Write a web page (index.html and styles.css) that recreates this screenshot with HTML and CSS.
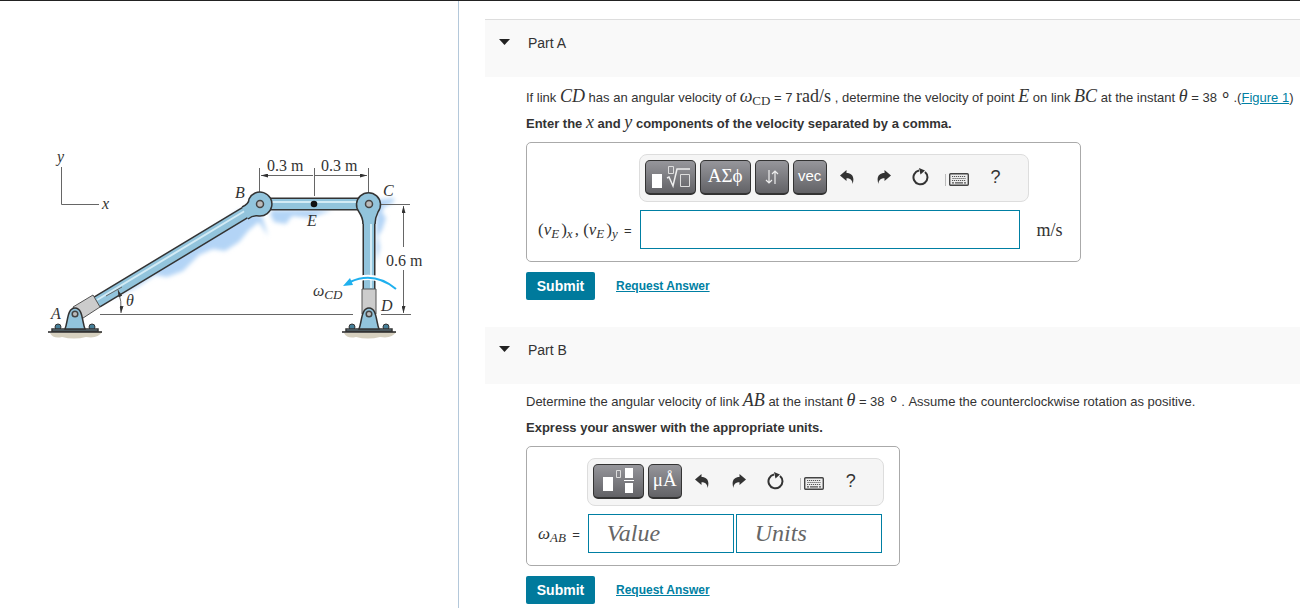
FILE: index.html
```html
<!DOCTYPE html>
<html lang="en">
	<head>
		<meta charset="utf-8">
		<title>Item 1</title>
		<link rel="stylesheet" href="styles.css">
	</head>
	<body>
		<svg class="sprite" aria-hidden="true">
			<symbol id="undo" viewBox="0 0 14 14">
				<path d="M0 5.5 6.5 0v3c5.500 0 8.500 4 6 11C12.500 10 10 8.300 6.500 8.300V11z"/>
			</symbol>
			<symbol id="redo" viewBox="0 0 14 14">
				<path d="M14 5.5 7.5 0v3C2 3-1 7 1.500 14 1.500 10 4 8.300 7.500 8.300V11z"/>
			</symbol>
			<symbol id="reset" viewBox="0 0 18 18">
				<path d="M13 4a7 7 0 1 1-6-1.500" fill="none" stroke="#333" stroke-width="2"/>
				<path d="M7 0l6 2.500-4.500 4z"/>
			</symbol>
			<symbol id="keyboard" viewBox="0 0 24 13">
				<path d="M.5 1v12" stroke="#bbb" fill="none"/>
				<rect x="4.7" y=".7" width="18.6" height="11.6" rx="1" fill="#eee" stroke="#444" stroke-width="1.4"/>
				<path d="M7 3.500h14M7.500 5.500h13M7 7.500h14" fill="none" stroke="#555" stroke-width="1.2" stroke-dasharray="1.2 .8"/>
				<path d="M7 9.800h2M10 9.800h8M19 9.800h2" fill="none" stroke="#555" stroke-width="1.2"/>
			</symbol>
		</svg>

		<div class="page">
			<aside class="figure">
				<svg class="linkage" viewBox="0 0 390 200" role="img" aria-label="Linkage ABCD">
					<defs>
						<filter id="soft"><feGaussianBlur stdDeviation="2"/></filter>
						<marker id="arrow" viewBox="0 0 7 4" refX="7" refY="2" markerWidth="7" markerHeight="4" markerUnits="userSpaceOnUse" orient="auto-start-reverse">
							<path d="M0 0 7 2 0 4z" fill="#333"/>
						</marker>
						<g id="support">
							<path class="ground" d="M-25 19q3 6 12 4 12 3 24 0 12 2 16-5z"/>
							<circle class="bolt" cx="-17" cy="13" r="3"/>
							<circle class="bolt" cx="17" cy="13" r="3"/>
							<path class="steel" d="M-23 15h46v2h-46z"/>
							<path class="steel" d="M-10 15C-7 8-8-6 0-6S7 8 10 15z"/>
							<path d="M-27 18h54" stroke="#222" stroke-width="1.5"/>
						</g>
					</defs>

					<!-- shading behind the links -->
					<g class="shade" filter="url(#soft)">
						<path d="M70 160 200 70l22 6 6 20-9-14-10 8-10 12-14 9-12-2-14 6-16 16-16 6-12-2-18 12z"/>
						<path d="M232 70h60l-22 8-18-2-6 8-12-2-4-8z"/>
						<path d="M336 60l18-2v4l-10 5-2 5 4 6-4 12-4 6 2 12-4 14z"/>
					</g>

					<!-- axes and dimension lines -->
					<g class="thin">
						<path d="M21.500 27v37.500H59"/>
						<path d="M60 174.500h253M341 174.500h30M340 64.500h30"/>
						<path d="M219.500 28v24M274.500 28v28M328.500 28v24"/>
						<path d="M221 35.500h52M275 35.500h52" marker-start="url(#arrow)" marker-end="url(#arrow)"/>
						<path d="M363.500 66v41" marker-start="url(#arrow)"/>
						<path d="M363.500 130v43" marker-end="url(#arrow)"/>
					</g>

					<!-- links -->
					<path class="outline" d="M57 162 216 66M222 64h104M329 66v84"/>
					<path class="bar" d="M57 162 216 66M222 64h104M329 66v84"/>
					<path class="shine" d="M57 160 208 69M232 62h84M331 80v68"/>
					<path class="sleeve" d="M33 167l20-12 7 12-20 13z"/>
					<path class="sleeve" d="M322 149h14v25h-14z"/>
					<path class="steel" d="M202 67Q209 64 209 59A12 12 0 1 1 219 76Q213 75 208 79"/>
					<path class="steel" d="M323 84Q323 78 319 72A12 12 0 1 1 338 72Q335 78 335 84"/>
					<use href="#support" x="35" y="174"/>
					<use href="#support" x="329" y="174"/>
					<g class="pin">
						<circle cx="220" cy="64" r="3.5"/>
						<circle cx="329" cy="64" r="3.5"/>
						<circle cx="35" cy="174" r="2.8"/>
						<circle cx="329" cy="174" r="2.8"/>
					</g>
					<circle cx="274" cy="64" r="3.3" fill="#111"/>
					<g class="thin">
						<path d="M66 156l16-9"/>
						<path d="M78 150q4 11 3 23" marker-start="url(#arrow)" marker-end="url(#arrow)"/>
					</g>

					<path d="M356 149q-22-19-46-7" fill="none" stroke="#fff" stroke-width="5"/>
					<path d="M356 149q-22-18-46-7" fill="none" stroke="#1fb0ee" stroke-width="2"/>
					<path d="M303 146l7-8 3 7z" fill="#1fb0ee"/>

					<g class="label">
						<text x="17" y="22"><tspan class="it">y</tspan></text>
						<text x="62" y="69"><tspan class="it">x</tspan></text>
						<text x="11" y="179"><tspan class="it">A</tspan></text>
						<text x="86" y="166"><tspan class="it">θ</tspan></text>
						<text x="195" y="58"><tspan class="it">B</tspan></text>
						<text x="267" y="86"><tspan class="it">E</tspan></text>
						<text x="343" y="56"><tspan class="it">C</tspan></text>
						<text x="341" y="171"><tspan class="it">D</tspan></text>
						<text x="273" y="156"><tspan class="it">ω</tspan><tspan class="it small" dy="3">CD</tspan></text>
						<text x="227" y="31">0.3 m</text>
						<text x="281" y="31">0.3 m</text>
						<text x="346" y="126">0.6 m</text>
					</g>
				</svg>
			</aside>

			<main class="parts">
				<section class="part">
					<header class="part-head first">
						<button class="toggle" aria-label="Collapse Part A"></button>
						<h2>Part A</h2>
					</header>
					<div class="part-body first">
						<p>If link <i>CD</i> has an angular velocity of <i>ω</i><sub>CD</sub> = 7 <span class="rm">rad/s</span> , determine the velocity of point <i>E</i> on link <i>BC</i> at the instant <i>θ</i> = 38 <sup>∘</sup>.(<a href="#figure1">Figure 1</a>)</p>
						<p class="hint">Enter the <i>x</i> and <i>y</i> components of the velocity separated by a comma.</p>
						<form class="answer">
							<div class="toolbar">
								<button type="button" class="key wide" aria-label="Templates">
									<svg width="39" height="24" viewBox="0 0 39 24">
										<path d="M1 9h10v14H1z" fill="#fff"/>
										<path d="M17.500 1.500h5v7h-5zM29.500 9.500h9v12h-9z" fill="none" stroke="#ddd"/>
										<path d="M16 13l2-1 4 9 4-17h13" fill="none" stroke="#eee" stroke-width="1.5"/>
									</svg>
								</button>
								<button type="button" class="key wide greek">ΑΣϕ</button>
								<button type="button" class="key" aria-label="Arrows">
									<svg width="14" height="16" viewBox="0 0 14 16" fill="none" stroke="#eee" stroke-width="1.2">
										<path d="M4 1v13M1 11l3 3 3-3M10 15V2M7 5l3-3 3 3"/>
									</svg>
								</button>
								<button type="button" class="key vec">vec</button>
								<div class="tools">
									<button type="button" class="tool" aria-label="Undo"><svg width="14" height="14"><use href="#undo"/></svg></button>
									<button type="button" class="tool" aria-label="Redo"><svg width="14" height="14"><use href="#redo"/></svg></button>
									<button type="button" class="tool" aria-label="Reset"><svg width="18" height="18"><use href="#reset"/></svg></button>
									<button type="button" class="tool board" aria-label="Keyboard"><svg width="24" height="13"><use href="#keyboard"/></svg></button>
									<button type="button" class="tool help" aria-label="Help">?</button>
								</div>
							</div>
							<label for="velocity">(<i>v</i><sub><i>E</i></sub>)<sub><i>x</i></sub>, (<i>v</i><sub><i>E</i></sub>)<sub><i>y</i></sub> <span class="eq">=</span></label>
							<div class="fields">
								<input type="text" id="velocity" class="long">
							</div>
							<span class="unit">m/s</span>
						</form>
						<div class="actions">
							<button class="submit">Submit</button>
							<a href="#answer-a">Request Answer</a>
						</div>
					</div>
				</section>

				<section class="part">
					<header class="part-head">
						<button class="toggle" aria-label="Collapse Part B"></button>
						<h2>Part B</h2>
					</header>
					<div class="part-body">
						<p>Determine the angular velocity of link <i>AB</i> at the instant <i>θ</i> = 38 <sup>∘</sup>. Assume the counterclockwise rotation as positive.</p>
						<p class="hint">Express your answer with the appropriate units.</p>
						<form class="answer">
							<div class="toolbar">
								<button type="button" class="key wide" aria-label="Templates">
									<svg width="32" height="28" viewBox="0 0 32 28">
										<path d="M1 10h10v14H1zM23 1h8v10h-8zM23 16h8v10h-8zM22 13h10v1H22z" fill="#fff"/>
										<path d="M14.500 3.500h4v7h-4z" fill="none" stroke="#ddd"/>
									</svg>
								</button>
								<button type="button" class="key greek">μÅ</button>
								<div class="tools">
									<button type="button" class="tool" aria-label="Undo"><svg width="14" height="14"><use href="#undo"/></svg></button>
									<button type="button" class="tool" aria-label="Redo"><svg width="14" height="14"><use href="#redo"/></svg></button>
									<button type="button" class="tool" aria-label="Reset"><svg width="18" height="18"><use href="#reset"/></svg></button>
									<button type="button" class="tool board" aria-label="Keyboard"><svg width="24" height="13"><use href="#keyboard"/></svg></button>
									<button type="button" class="tool help" aria-label="Help">?</button>
								</div>
							</div>
							<label for="omega"><i>ω</i><sub><i>AB</i></sub> <span class="eq">=</span></label>
							<div class="fields">
								<input type="text" id="omega" placeholder="Value">
								<input type="text" aria-label="Units" placeholder="Units">
							</div>
						</form>
						<div class="actions">
							<button class="submit">Submit</button>
							<a href="#answer-b">Request Answer</a>
						</div>
					</div>
				</section>
			</main>
		</div>
	</body>
</html>
```
FILE: styles.css
```css
*{
	margin: 0;
	padding: 0;
	box-sizing: border-box;
}

body{
	border-top: 1px solid #222;
	background-color: #fff;
	color: #333;
	font-family: "Liberation Sans", Arial, sans-serif;
	font-size: 13px;
}

.sprite{
	display: none;
}

a{
	color: #007fa3;
}

i, .rm, .unit{
	font-family: "Liberation Serif", serif;
	font-size: 18px;
	line-height: 0;
}

.page{
	display: flex;
	min-height: calc(100vh - 1px);
}

/* left pane */
.figure{
	flex: 0 0 459px;
	padding: 139px 28px 0 40px;
	border-right: 1px solid #b4c8da;
}

.linkage{
	display: block;
	width: 100%;
	overflow: visible;
}

.thin{
	fill: none;
	stroke: #666;
	stroke-width: 1;
}

.outline{
	fill: none;
	stroke: #333;
	stroke-width: 13;
}

.bar{
	fill: none;
	stroke: #92c4dc;
	stroke-width: 10;
}

.shine{
	fill: none;
	stroke: #d3ebf5;
	stroke-width: 2;
}

.shade{
	fill: #b3d4f6;
}

.steel, .bolt{
	fill: #92c4dc;
	stroke: #333;
	stroke-width: 1.5;
}

.bolt{
	fill: #467f99;
	stroke-width: 1;
}

.ground{
	fill: #d6d0bf;
}

.sleeve{
	fill: #ccc;
	stroke: #555;
	stroke-width: 1;
}

.pin circle{
	fill: #bbb;
	stroke: #444;
	stroke-width: 1.5;
}

.label{
	fill: #333;
	font-family: "Liberation Serif", serif;
	font-size: 16px;
}

.label .it{
	font-style: italic;
}

.label .small{
	font-size: 13px;
}

/* right pane */
.parts{
	flex: 1;
	min-width: 0;
	padding: 18px 0 0 26px;
}

.part-head{
	display: flex;
	align-items: flex-start;
	height: 57px;
	padding: 14px 14px 0;
	background-color: #f9f9f9;
}

.part-head.first{
	height: 58px;
	border-top: 1px solid #ddd;
}

.part-head h2{
	font-size: 14px;
	font-weight: normal;
	line-height: 18px;
	margin-left: 18px;
}

.toggle{
	width: 11px;
	height: 6px;
	margin-top: 5px;
	border: none;
	background-color: #222;
	clip-path: polygon(0 0, 100% 0, 50% 100%);
}

.part-body{
	padding: 5px 0 27px 41px;
}

.part-body.first{
	padding-top: 8px;
}

.part-body p{
	line-height: 26px;
}

.part-body .hint{
	font-weight: bold;
}

.hint i{
	font-weight: normal;
}

sub, sup{
	line-height: 0;
}

sub{
	font-family: "Liberation Serif", serif;
	font-size: 13px;
	vertical-align: -3px;
}

sub i{
	font-size: 13px;
}

sup{
	margin-right: 2px;
	font-size: 18px;
	vertical-align: 2px;
}

.answer{
	display: inline-grid;
	grid-template-columns: auto auto auto;
	align-items: center;
	row-gap: 8px;
	margin-top: 5px;
	padding: 11px 15px 12px 11px;
	border: 1px solid #aaa;
	border-radius: 5px;
	vertical-align: top;
}

.toolbar{
	grid-column: 2;
	display: flex;
	align-items: flex-start;
	gap: 4px;
	height: 48px;
	padding: 5px;
	border: 1px solid #ddd;
	border-radius: 8px;
	background-color: #f5f5f5;
}

.key{
	display: flex;
	align-items: center;
	justify-content: center;
	width: 34px;
	height: 35px;
	border: 1px solid #333;
	border-bottom-width: 2px;
	border-radius: 5px;
	background: linear-gradient(#96969b, #626266);
	color: #fff;
	font-size: 15px;
}

.key.wide{
	width: 51px;
}

.key.greek{
	padding-bottom: 2px;
	font-family: "Liberation Serif", serif;
	font-size: 19px;
}

.key.vec{
	padding-bottom: 4px;
}

.tools{
	display: flex;
	margin-left: -2px;
	padding-right: 5px;
}

.tool{
	display: flex;
	align-items: center;
	justify-content: center;
	width: 37px;
	height: 34px;
	border: none;
	background: none;
	fill: #333;
}

.tool.board{
	width: 34px;
	padding-top: 4px;
}

.tool.help{
	width: 44px;
	color: #333;
	font-size: 18px;
}

.answer label{
	grid-column: 1;
	padding-right: 7px;
	font-family: "Liberation Serif", serif;
	font-size: 17px;
}

.answer label > i{
	font-size: 17px;
}

.answer sub{
	margin-right: 2px;
}

.answer .eq{
	font-family: "Liberation Sans", Arial, sans-serif;
	font-size: 13px;
}

.fields{
	display: flex;
	gap: 2px;
	padding: 0 2px 0 1px;
}

.fields input{
	flex: 1;
	width: 146px;
	height: 39px;
	padding: 0 18px;
	border: 1px solid #007fa3;
	background-color: #fff;
	font-family: "Liberation Serif", serif;
	font-size: 24px;
}

.fields .long{
	margin-right: 7px;
}

.fields input::placeholder{
	color: #666;
	font-style: italic;
}

.unit{
	padding: 0 2px 0 8px;
}

.actions{
	display: flex;
	align-items: center;
	gap: 21px;
	margin-top: 10px;
	font-size: 12px;
	font-weight: bold;
}

.submit{
	width: 69px;
	height: 28px;
	border: none;
	border-radius: 2px;
	background-color: #007a9c;
	color: #fff;
	font-family: inherit;
	font-size: 14px;
	font-weight: bold;
}
```
